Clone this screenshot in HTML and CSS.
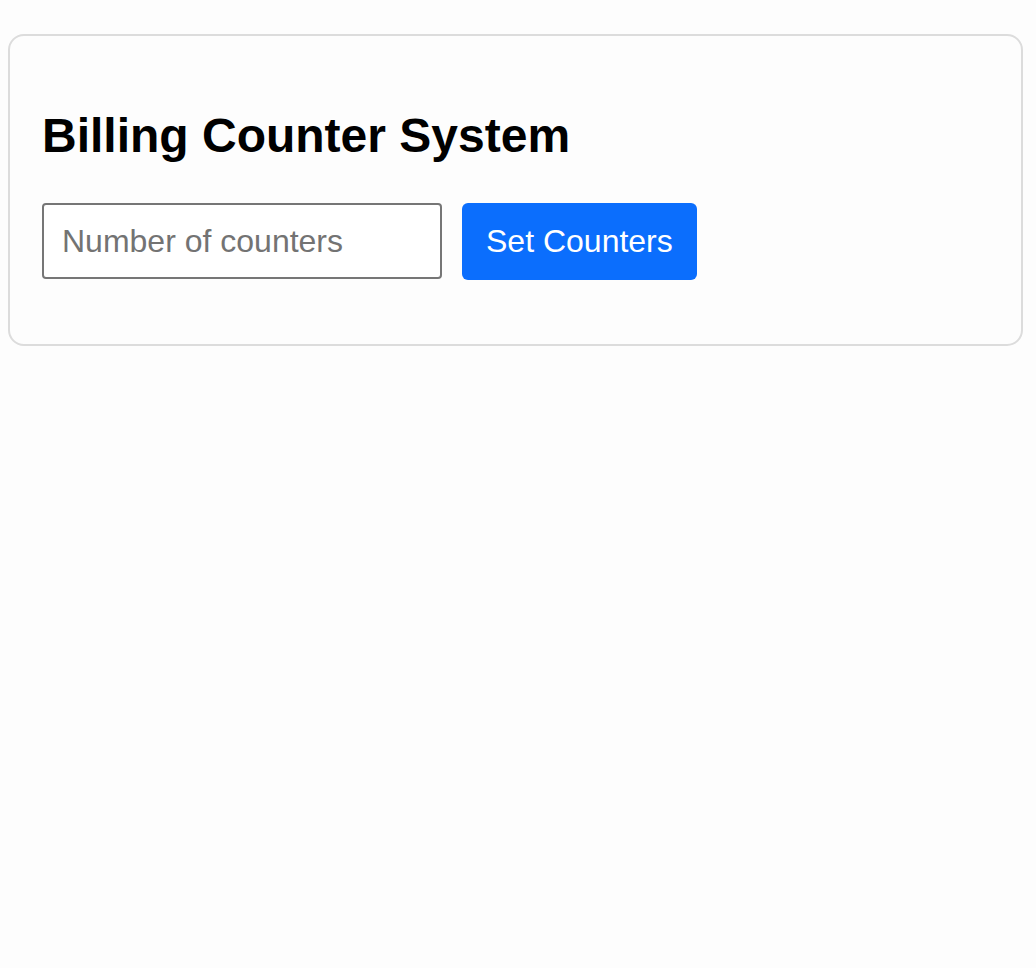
FILE: index.html
```html
<!DOCTYPE html>
<html lang="en">
<head>
<meta charset="utf-8">
<title>Billing Counter System</title>
<link rel="stylesheet" href="styles.css">
</head>
<body>
  <div class="page">
    <div class="card">
      <h1 class="title">Billing Counter System</h1>
      <div class="controls">
        <input class="count-input" type="number" placeholder="Number of counters">
        <button class="set-btn" type="button">Set Counters</button>
      </div>
    </div>
  </div>
</body>
</html>
```

FILE: styles.css
```css
html, body {
  margin: 0;
  padding: 0;
  background: #fdfdfd;
  font-family: "Liberation Sans", Arial, sans-serif;
}

.page {
  padding: 34px 13px 0 8px;
}

.card {
  border: 2px solid #dcdcdc;
  border-radius: 16px;
  padding: 32px;
  background: #fdfdfd;
}

.title {
  margin: 40px 0 40px 0;
  font-size: 48px;
  font-weight: 700;
  color: #000;
  line-height: normal;
}

.controls {
  display: flex;
  gap: 20px;
  align-items: flex-start;
  margin-bottom: 32px;
}

.count-input {
  box-sizing: border-box;
  width: 400px;
  height: 76px;
  border: 2px solid #767676;
  border-radius: 4px;
  padding: 0 18px;
  font-family: "Liberation Sans", Arial, sans-serif;
  font-size: 32px;
  color: #000;
  background: #fff;
  outline: none;
}

.count-input::placeholder {
  color: #737373;
}

.set-btn {
  box-sizing: border-box;
  height: 77px;
  padding: 0 24px;
  border: none;
  border-radius: 6px;
  background: #0b6efd;
  color: #fff;
  font-family: "Liberation Sans", Arial, sans-serif;
  font-size: 32px;
  cursor: pointer;
}
```
